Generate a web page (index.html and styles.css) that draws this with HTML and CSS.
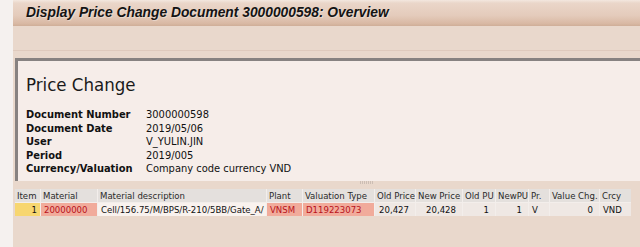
FILE: index.html
```html
<!DOCTYPE html>
<html lang="en">
<head>
  <meta charset="UTF-8">
  <title>Display Price Change Document 3000000598: Overview</title>
  <link rel="stylesheet" href="styles.css">
</head>
<body>
  <div class="screen">
    <div class="title-bar">
      <h1>Display Price Change Document 3000000598: Overview</h1>
    </div>
    <div class="toolbar"></div>
    <div class="header-panel">
      <h2>Price Change</h2>
      <dl class="doc-info">
        <dt>Document Number</dt><dd>3000000598</dd>
        <dt>Document Date</dt><dd>2019/05/06</dd>
        <dt>User</dt><dd>V_YULIN.JIN</dd>
        <dt>Period</dt><dd>2019/005</dd>
        <dt>Currency/Valuation</dt><dd>Company code currency VND</dd>
      </dl>
    </div>
    <div class="splitter"></div>
    <div class="items">
      <div class="grid">
        <div class="th">Item</div>
        <div class="th">Material</div>
        <div class="th">Material description</div>
        <div class="th">Plant</div>
        <div class="th">Valuation Type</div>
        <div class="th">Old Price</div>
        <div class="th">New Price</div>
        <div class="th">Old PU</div>
        <div class="th">NewPU</div>
        <div class="th">Pr.</div>
        <div class="th">Value Chg.</div>
        <div class="th">Crcy</div>

        <div class="td key num">1</div>
        <div class="td ref">20000000</div>
        <div class="td text">Cell/156.75/M/BPS/R-210/5BB/Gate_A/</div>
        <div class="td ref">VNSM</div>
        <div class="td ref">D119223073</div>
        <div class="td out num">20,427</div>
        <div class="td out num">20,428</div>
        <div class="td out num">1</div>
        <div class="td out num">1</div>
        <div class="td out">V</div>
        <div class="td out num">0</div>
        <div class="td out">VND</div>
      </div>
    </div>
  </div>
</body>
</html>
```

FILE: styles.css
```css
html, body {
  margin: 0;
  height: 100%;
}
body {
  background: #f5f1ef;
  padding-left: 13px;
  font-family: "DejaVu Sans Condensed", "DejaVu Sans", sans-serif;
  font-stretch: condensed;
  color: #111;
  overflow: hidden;
}
.screen {
  height: 100%;
  background: #e9d8cc;
  display: flex;
  flex-direction: column;
}
.title-bar {
  height: 26px;
  background: linear-gradient(#f3e7df 0, #ead6c9 12%, #e4cbbb 60%, #d9b9a4 90%, #cfae98 100%);
  padding-left: 13px;
  box-sizing: border-box;
}
.title-bar h1 {
  margin: 0;
  font-family: "Liberation Sans", Arial, sans-serif;
  font-stretch: normal;
  font-size: 13.8px;
  font-weight: bold;
  font-style: italic;
  line-height: 26px;
  color: #141414;
  text-shadow: 1px 1px 0 rgba(255, 255, 255, 0.35);
}
.toolbar {
  height: 24px;
  background: #e9d8cc;
  border-bottom: 1px solid #dfcabd;
}
.header-panel {
  margin-top: 7px;
  margin-left: 2px;
  height: 123px;
  box-sizing: border-box;
  background: #f6ede9;
  border-top: 3px solid #878281;
  border-left: 3px solid #878281;
  padding: 13px 0 0 8px;
}
.header-panel h2 {
  margin: 0 0 12px;
  font-size: 18.5px;
  font-weight: normal;
  line-height: 22px;
  color: #1a1a1a;
}
.doc-info {
  margin: 0;
  display: grid;
  grid-template-columns: 120px auto;
  line-height: 13.5px;
  font-size: 11px;
}
.doc-info dt {
  font-weight: bold;
}
.doc-info dd {
  margin: 0;
}
.splitter {
  margin: 0 0 0 347px;
  width: 13px;
  height: 3px;
  background: repeating-linear-gradient(90deg, #b9aca4 0 1px, transparent 1px 2px);
  opacity: 0.6;
}
.items {
  padding: 5px 0 0 2px;
}
.grid {
  display: grid;
  grid-template-columns: 25px 56px 168px 35px 71px 40px 46px 32px 32px 20px 49px 31px;
  gap: 1px;
  width: max-content;
  background: #f3eeeb;
  font-size: 9.5px;
  line-height: 13px;
}
.th {
  background: #e4e0dd;
  color: #2a2a2a;
  padding: 0 2px;
  white-space: nowrap;
  overflow: hidden;
}
.td {
  padding: 0 3px;
  white-space: nowrap;
  overflow: hidden;
}
.num {
  text-align: right;
  padding-right: 6px;
}
.key {
  background: #f7d670;
  padding-right: 3px;
}
.ref {
  background: #f1ab9b;
  color: #b8121a;
}
.text {
  background: #f9f2ee;
}
.out {
  background: #efe8e4;
}
```
